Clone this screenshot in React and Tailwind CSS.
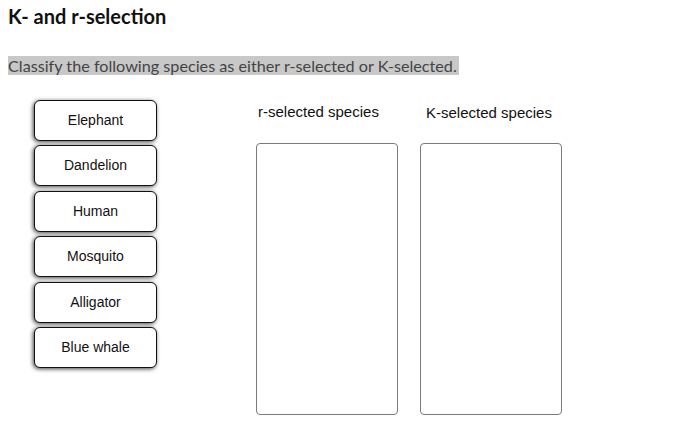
import React from "react";

const species = ["Elephant", "Dandelion", "Human", "Mosquito", "Alligator", "Blue whale"];

const App = () => {
  return (
    <div className="w-[675px] h-[432px] bg-white px-[8px] pt-[4px] overflow-hidden">
      {/* Header */}
      <h1 className="font-['Lato',sans-serif] font-bold text-[20px] leading-[24px] text-[#111]">
        K- and r-selection
      </h1>

      <p className="mt-[29px] font-['Lato',sans-serif] text-[16.2px] leading-[18px] text-[#444]">
        <span className="bg-[#c8c8c8] pr-[2px]">
          Classify the following species as either r-selected or K-selected.
        </span>
      </p>

      <div className="flex mt-[25px] font-['Liberation_Sans',Arial,sans-serif] text-[14px] text-[#111]">
        {/* Draggable cards */}
        <div className="flex flex-col gap-[4.4px] ml-[26px] w-[123px]">
          {species.map((s) => (
            <div
              key={s}
              className="h-[41px] flex items-center justify-center bg-white border border-[#111] rounded-[6px] shadow-[-1px_1px_4px_rgba(0,0,0,0.75)]"
            >
              {s}
            </div>
          ))}
        </div>

        {/* Drop zones */}
        <div className="flex gap-[22px] ml-[99px] text-[15px]">
          <div className="w-[142px] flex flex-col">
            <div className="h-[25px] pl-[2px] leading-[24px]">r-selected species</div>
            <div className="mt-[18px] h-[272px] border border-[#7a7a7a] rounded-[4px]" />
          </div>
          <div className="w-[142px] flex flex-col">
            <div className="h-[25px] pl-[6px] leading-[26px]">K-selected species</div>
            <div className="mt-[18px] h-[272px] border border-[#7a7a7a] rounded-[4px]" />
          </div>
        </div>
      </div>
    </div>
  );
};

export default App;
